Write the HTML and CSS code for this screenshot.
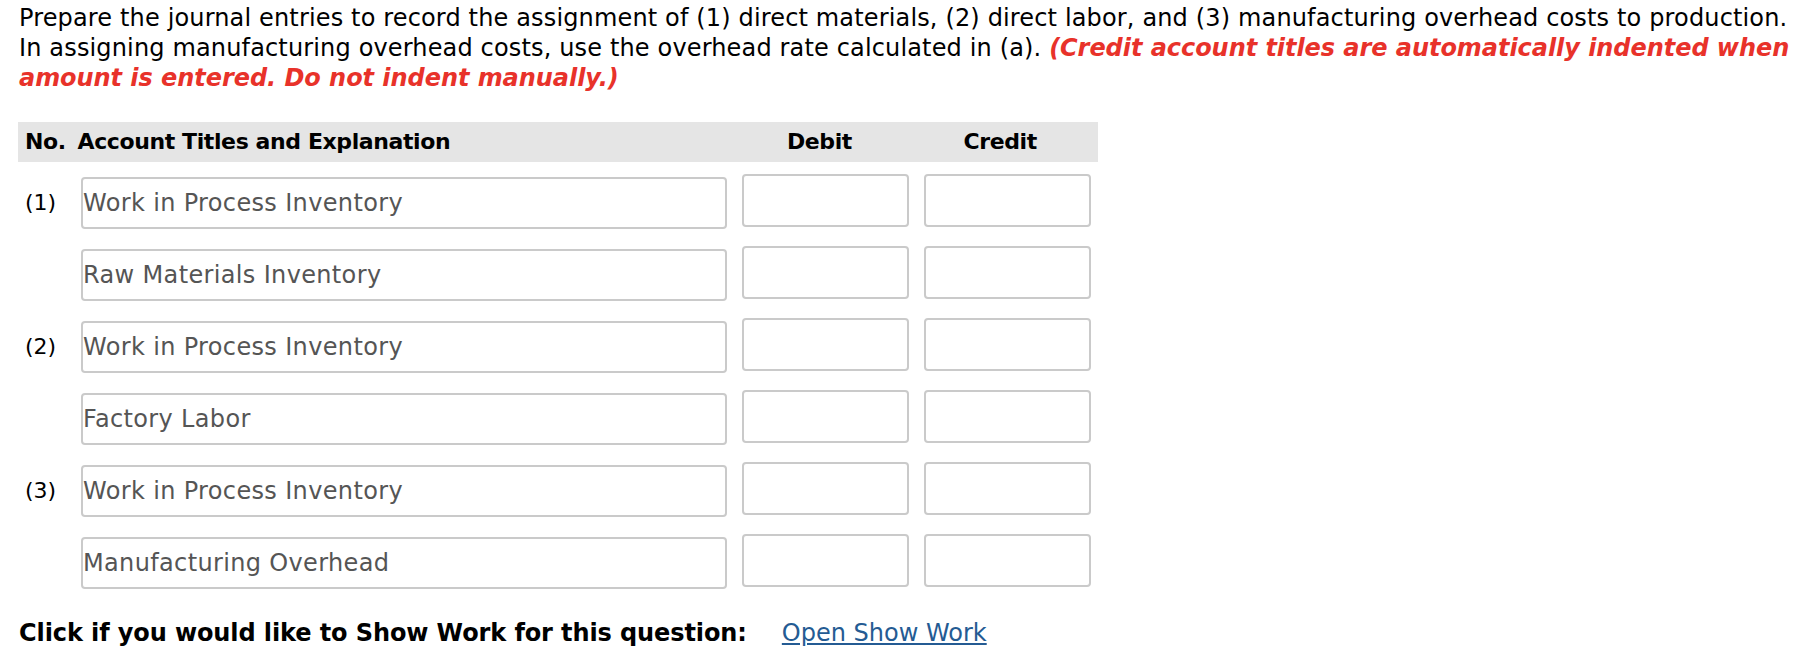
FILE: index.html
```html
<!DOCTYPE html>
<html lang="en">
<head>
<meta charset="utf-8">
<title>Journal Entries</title>
<link rel="stylesheet" href="styles.css">
</head>
<body>
<p class="intro">Prepare the journal entries to record the assignment of (1) direct materials, (2) direct labor, and (3) manufacturing overhead costs to production.<br>In assigning manufacturing overhead costs, use the overhead rate calculated in (a). <em class="note">(Credit account titles are automatically indented when<br>amount is entered. Do not indent manually.)</em></p>

<div class="journal">
  <div class="head">
    <div class="h-no">No.</div>
    <div class="h-acct">Account Titles and Explanation</div>
    <div class="h-amt">Debit</div>
    <div class="h-amt">Credit</div>
  </div>

  <div class="row">
    <div class="no">(1)</div>
    <input class="acct" type="text" value="Work in Process Inventory" readonly>
    <input class="amt" type="text" value="" readonly>
    <input class="amt" type="text" value="" readonly>
  </div>
  <div class="row">
    <div class="no"></div>
    <input class="acct" type="text" value="Raw Materials Inventory" readonly>
    <input class="amt" type="text" value="" readonly>
    <input class="amt" type="text" value="" readonly>
  </div>
  <div class="row">
    <div class="no">(2)</div>
    <input class="acct" type="text" value="Work in Process Inventory" readonly>
    <input class="amt" type="text" value="" readonly>
    <input class="amt" type="text" value="" readonly>
  </div>
  <div class="row">
    <div class="no"></div>
    <input class="acct" type="text" value="Factory Labor" readonly>
    <input class="amt" type="text" value="" readonly>
    <input class="amt" type="text" value="" readonly>
  </div>
  <div class="row">
    <div class="no">(3)</div>
    <input class="acct" type="text" value="Work in Process Inventory" readonly>
    <input class="amt" type="text" value="" readonly>
    <input class="amt" type="text" value="" readonly>
  </div>
  <div class="row">
    <div class="no"></div>
    <input class="acct" type="text" value="Manufacturing Overhead" readonly>
    <input class="amt" type="text" value="" readonly>
    <input class="amt" type="text" value="" readonly>
  </div>
</div>

<p class="showwork"><span class="sw-label">Click if you would like to Show Work for this question:</span><a class="sw-link" href="#">Open Show Work</a></p>
</body>
</html>
```

FILE: styles.css
```css
html, body {
  background: #ffffff;
}

body {
  margin: 0;
  padding: 3px 0 0 19px;
  font-family: "DejaVu Sans", Verdana, sans-serif;
  font-size: 24px;
  line-height: 30px;
  color: #000000;
  overflow: hidden;
}

.intro {
  margin: 0;
  white-space: nowrap;
  letter-spacing: 0.15px;
}

.note {
  color: #e8322a;
  font-weight: bold;
  font-style: italic;
  letter-spacing: -0.05px;
}

.journal {
  margin: 29px 0 0 -1px;
  width: 1080px;
}

.head {
  display: flex;
  align-items: center;
  height: 40px;
  background: #e5e5e5;
  font-weight: bold;
  font-size: 22px;
  letter-spacing: -0.4px;
}

.h-no {
  width: 53px;
  padding-left: 7px;
}

.h-acct {
  width: 664px;
}

.h-amt {
  width: 167px;
  margin-right: 15px;
  text-align: center;
}

.row {
  display: flex;
  align-items: flex-start;
  margin-top: 17px;
}

.head + .row {
  margin-top: 12px;
}

.no {
  width: 56px;
  padding-left: 7px;
  margin-top: 3px;
  height: 52px;
  display: flex;
  align-items: center;
  font-size: 22px;
}

input {
  font-family: "DejaVu Sans", Verdana, sans-serif;
  font-size: 24px;
  letter-spacing: 0.35px;
  color: #555555;
  background: #ffffff;
  border: 2px solid #cacaca;
  border-radius: 4px;
  box-sizing: border-box;
  margin: 0;
  outline: none;
}

.acct {
  width: 646px;
  height: 52px;
  margin-top: 3px;
  padding: 0 1px 0 0;
}

.amt {
  width: 167px;
  height: 53px;
  margin-left: 15px;
  padding: 0 4px;
}

.showwork {
  margin: 29px 0 0;
  font-weight: bold;
  display: flex;
  align-items: center;
  letter-spacing: -0.1px;
}

.sw-link {
  margin-left: 35px;
  font-weight: normal;
  color: #245b93;
  text-decoration: underline;
  letter-spacing: 0;
}
```
